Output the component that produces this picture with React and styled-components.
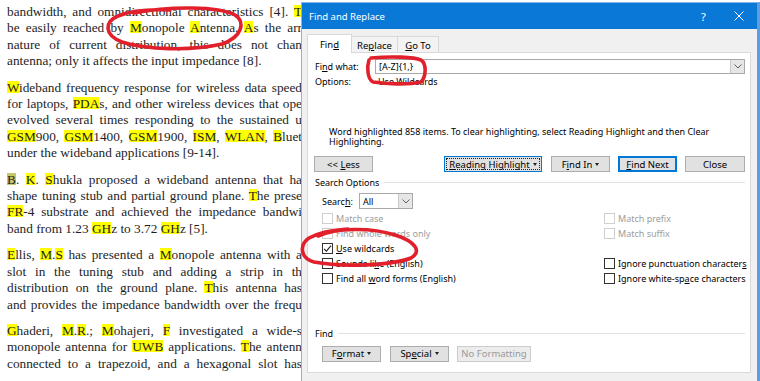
import React from "react";
import styled, { createGlobalStyle } from "styled-components";

const Global = createGlobalStyle`
  html, body { margin: 0; padding: 0; background: #fff; }
  * { box-sizing: border-box; }
`;

const Stage = styled.div`
  position: relative;
  width: 760px;
  height: 381px;
  overflow: hidden;
  background: #fff;
`;

/* ---------- document ---------- */
const Doc = styled.div`
  padding: 4px 0 0 7px;
  font-family: "Liberation Serif", "Times New Roman", serif;
  font-size: 13.3px;
  line-height: 16.4px;
  color: #1e1e1e;
`;
const Para = styled.div`
  margin-bottom: 10px;
`;
const Line = styled.div`
  width: ${(p) => p.$w}px;
  white-space: nowrap;
  text-align: ${(p) => (p.$last ? "left" : "justify")};
  text-align-last: ${(p) => (p.$last ? "left" : "justify")};
`;
const Hl = styled.span`
  ${(p) => {
    const c = p.$tone === "gray" ? "#c9c76c" : "#ffff00";
    return `background: linear-gradient(transparent 1px, ${c} 1px, ${c} calc(100% - 2px), transparent calc(100% - 2px));`;
  }}
`;

const paragraphs = [
  [
    "bandwidth, and omnidirectional characteristics [4]. {T}",
    "be easily reached by {M}onopole {A}ntenna. {A}s the arr",
    "nature of current distribution, this does not chan",
    "antenna; only it affects the input impedance [8].",
  ],
  [
    "{W}ideband frequency response for wireless data speed",
    "for laptops, {PDA}s, and other wireless devices that ope",
    "evolved several times responding to the sustained u",
    "{GSM}900, {GSM}1400, {GSM}1900, {ISM}, {WLAN}, {B}luet",
    "under the wideband applications [9-14].",
  ],
  [
    "<B>. {K}. {S}hukla proposed a wideband antenna that ha",
    "shape tuning stub and partial ground plane. {T}he prese",
    "{FR}-4 substrate and achieved the impedance bandwi",
    "band from 1.23 {GH}z to 3.72 {GH}z [5].",
  ],
  [
    "{E}llis, {M}.{S} has presented a {M}onopole antenna with a",
    "slot in the tuning stub and adding a strip in th",
    "distribution on the ground plane. {T}his antenna has",
    "and provides the impedance bandwidth over the frequ",
  ],
  [
    "{G}haderi, {M}.{R}.; {M}ohajeri, {F} investigated a wide-s",
    "monopole antenna for {UWB} applications. {T}he antenn",
    "connected to a trapezoid, and a hexagonal slot has",
  ],
];
const lastFlags = [true, true, true, false, false];

function renderLine(text) {
  const parts = text.split(/(\{[^}]*\}|<[^>]*>)/);
  return parts.map((s, i) => {
    if (s.startsWith("{")) return <Hl key={i}>{s.slice(1, -1)}</Hl>;
    if (s.startsWith("<"))
      return (
        <Hl key={i} $tone="gray">
          {s.slice(1, -1)}
        </Hl>
      );
    return <React.Fragment key={i}>{s}</React.Fragment>;
  });
}

/* ---------- dialog ---------- */
const Dialog = styled.section`
  position: absolute;
  left: 301px;
  top: 2px;
  width: 459px;
  height: 381px;
  border: 1px solid #86b6e6;
  border-right: 3px solid #5d9de0;
  border-bottom: none;
  background: #f0f0f0;
  font-family: "Noto Sans", "Open Sans", sans-serif;
  font-size: 9px;
  color: #000;
  display: flex;
  flex-direction: column;
`;
const TitleBar = styled.header`
  height: 26px;
  flex: none;
  background: #0a78d7;
  color: #fff;
  display: flex;
  align-items: center;
  padding-left: 7px;
`;
const TitleText = styled.div`
  flex: 1;
  font-size: 9.5px;
`;
const TitleButton = styled.div`
  width: 35px;
  height: 26px;
  display: flex;
  align-items: center;
  justify-content: center;
  font-size: 11px;
  margin-right: ${(p) => p.$mr || 0}px;
`;
const Body = styled.div`
  flex: 1;
  padding: 5px 6px 0 5px;
  display: flex;
  flex-direction: column;
`;
const TabRow = styled.div`
  display: flex;
  align-items: flex-end;
  height: 19px;
  position: relative;
  z-index: 1;
  margin-bottom: -1px;
`;
const Tab = styled.div`
  width: ${(p) => p.$w}px;
  height: ${(p) => (p.$sel ? 19 : 16)}px;
  margin-bottom: ${(p) => (p.$sel ? 0 : 1)}px;
  background: ${(p) => (p.$sel ? "#fff" : "#f3f3f3")};
  border: 1px solid #d9d9d9;
  border-bottom: none;
  border-left-width: ${(p) => (p.$noLeft ? 0 : 1)}px;
  display: flex;
  align-items: center;
  justify-content: center;
  padding-top: ${(p) => (p.$sel ? 0 : 1)}px;
  font-size: 9.5px;
`;
const Panel = styled.div`
  height: 321px;
  background: #fff;
  border: 1px solid #d9d9d9;
  padding: 0 5px 0 7px;
  display: flex;
  flex-direction: column;
`;
const U = styled.span`
  text-decoration: underline;
  text-underline-offset: 1px;
`;
const FieldRow = styled.div`
  display: flex;
  align-items: center;
  height: ${(p) => p.$h}px;
  margin-top: ${(p) => p.$mt}px;
  margin-left: ${(p) => p.$ml || 0}px;
`;
const Label = styled.div`
  width: ${(p) => p.$w}px;
  flex: none;
`;
const Combo = styled.div`
  flex: ${(p) => (p.$w ? "none" : 1)};
  width: ${(p) => (p.$w ? `${p.$w}px` : "auto")};
  height: ${(p) => p.$h}px;
  border: 1px solid #a9a9a9;
  background: #fff;
  display: flex;
  align-items: stretch;
`;
const ComboText = styled.div`
  flex: 1;
  padding-left: 3px;
  display: flex;
  align-items: center;
`;
const ComboDrop = styled.div`
  width: 14px;
  background: #e6e6e6;
  border-left: 1px solid #c9c9c9;
  display: flex;
  align-items: center;
  justify-content: center;
`;
const Message = styled.div`
  margin: 40px 0 0 14px;
  line-height: 10px;
  height: 20px;
`;
const ButtonRow = styled.div`
  display: flex;
  justify-content: space-between;
  margin-top: ${(p) => p.$mt}px;
  margin-left: ${(p) => p.$ml}px;
`;
const ButtonGroup = styled.div`
  display: flex;
  gap: ${(p) => p.$gap}px;
`;
const Button = styled.div`
  width: ${(p) => p.$w}px;
  height: 16px;
  background: ${(p) => (p.$disabled ? "#ececec" : "#e1e1e1")};
  border: 1px solid
    ${(p) => (p.$default || p.$focus ? "#0078d7" : p.$disabled ? "#cccccc" : "#adadad")};
  box-shadow: ${(p) => (p.$default ? "inset 0 0 0 1px #0078d7" : "none")};
  outline: ${(p) => (p.$focus ? "1px dotted #222" : "none")};
  outline-offset: -3px;
  color: ${(p) => (p.$disabled ? "#9a9a9a" : "#000")};
  display: flex;
  align-items: center;
  justify-content: center;
  white-space: pre;
  margin-right: ${(p) => p.$mr || 0}px;
  font-size: 9.5px;
`;
const Caret = styled.span`
  display: inline-block;
  width: 0;
  height: 0;
  margin-left: 3px;
  border-left: 2.5px solid transparent;
  border-right: 2.5px solid transparent;
  border-top: 3px solid #222;
`;
const GroupHeader = styled.div`
  display: flex;
  align-items: center;
  height: 12px;
  margin-top: ${(p) => p.$mt}px;
`;
const Rule = styled.div`
  flex: 1;
  height: 1px;
  background: #e2e2e2;
  margin-left: 5px;
`;
const OptionGrid = styled.div`
  display: grid;
  grid-template-columns: 282px 1fr;
  grid-auto-rows: 15.2px;
  margin: 1.5px 0 0 7px;
`;
const Option = styled.div`
  display: flex;
  align-items: center;
  gap: 3px;
  white-space: nowrap;
  color: ${(p) => (p.$disabled ? "#9d9d9d" : "#000")};
`;
const Box = styled.div`
  width: 11px;
  height: 11px;
  flex: none;
  border: 1px solid ${(p) => (p.$disabled ? "#cfcfcf" : "#333")};
  background: #fff;
  display: flex;
  align-items: center;
  justify-content: center;
`;

const Chevron = () => (
  <svg width="8" height="5" viewBox="0 0 8 5">
    <path d="M0.5 0.5 L4 4 L7.5 0.5" fill="none" stroke="#606060" strokeWidth="1" />
  </svg>
);
const Check = () => (
  <svg width="9" height="9" viewBox="0 0 9 9">
    <path d="M1 4.8 L3.4 7.2 L8 1.6" fill="none" stroke="#222" strokeWidth="1.1" />
  </svg>
);
const CloseX = () => (
  <svg width="10" height="10" viewBox="0 0 10 10">
    <path d="M0.5 0.5 L9.5 9.5 M9.5 0.5 L0.5 9.5" stroke="#fff" strokeWidth="1" />
  </svg>
);

const CheckOption = ({ checked, disabled, children }) => (
  <Option $disabled={disabled}>
    <Box $disabled={disabled}>{checked && <Check />}</Box>
    <span>{children}</span>
  </Option>
);

/* ---------- annotations ---------- */
const Ink = styled.svg`
  position: absolute;
  left: 0;
  top: 0;
  width: 760px;
  height: 381px;
  pointer-events: none;
  z-index: 5;
`;

export default function App() {
  return (
    <Stage>
      <Global />
      <Doc>
        {paragraphs.map((lines, pi) => (
          <Para key={pi}>
            {lines.map((l, li) => {
              const last = li === lines.length - 1 && lastFlags[pi];
              return (
                <Line key={li} $w={295} $last={last}>
                  {renderLine(l)}
                </Line>
              );
            })}
          </Para>
        ))}
      </Doc>

      <Dialog>
        <TitleBar>
          <TitleText>Find and Replace</TitleText>
          <TitleButton>?</TitleButton>
          <TitleButton $mr={1}>
            <CloseX />
          </TitleButton>
        </TitleBar>
        <Body>
          <TabRow>
            <Tab $w={45} $sel>
              <span>
                Fin<U>d</U>
              </span>
            </Tab>
            <Tab $w={46} $noLeft>
              <span>
                Re<U>p</U>lace
              </span>
            </Tab>
            <Tab $w={41} $noLeft>
              <span>
                <U>G</U>o To
              </span>
            </Tab>
          </TabRow>
          <Panel>
            <FieldRow $h={15} $mt={6}>
              <Label $w={60}>
                Fi<U>n</U>d what:
              </Label>
              <Combo $h={15}>
                <ComboText>[A-Z]{"{1,}"}</ComboText>
                <ComboDrop>
                  <Chevron />
                </ComboDrop>
              </Combo>
            </FieldRow>
            <FieldRow $h={12} $mt={1}>
              <Label $w={63}>Options:</Label>
              <div>Use Wildcards</div>
            </FieldRow>

            <Message>
              Word highlighted 858 items. To clear highlighting, select Reading Highlight and then Clear
              <br />
              Highlighting.
            </Message>

            <ButtonRow $mt={9} $ml={-1}>
              <Button $w={59}>
                <span>
                  {"<< "}
                  <U>L</U>ess
                </span>
              </Button>
              <ButtonGroup $gap={8}>
                <Button $w={98} $focus $mr={1}>
                  <span>
                    <U>R</U>eading Highlight
                  </span>
                  <Caret />
                </Button>
                <Button $w={59}>
                  <span>
                    F<U>i</U>nd In
                  </span>
                  <Caret />
                </Button>
                <Button $w={59} $default>
                  <span>
                    <U>F</U>ind Next
                  </span>
                </Button>
                <Button $w={60}>Close</Button>
              </ButtonGroup>
            </ButtonRow>

            <GroupHeader $mt={4}>
              <span>Search Options</span>
              <Rule />
            </GroupHeader>

            <FieldRow $h={16} $mt={5} $ml={7}>
              <Label $w={37}>
                Searc<U>h</U>:
              </Label>
              <Combo $h={16} $w={54}>
                <ComboText>All</ComboText>
                <ComboDrop>
                  <Chevron />
                </ComboDrop>
              </Combo>
            </FieldRow>

            <OptionGrid>
              <CheckOption disabled>Match case</CheckOption>
              <CheckOption disabled>Match prefix</CheckOption>
              <CheckOption disabled>Find whole words only</CheckOption>
              <CheckOption disabled>Match suffix</CheckOption>
              <CheckOption checked>
                <U>U</U>se wildcards
              </CheckOption>
              <div />
              <CheckOption>
                Sounds li<U>k</U>e (English)
              </CheckOption>
              <CheckOption>
                Ignore punctuation character<U>s</U>
              </CheckOption>
              <CheckOption>
                Find all <U>w</U>ord forms (English)
              </CheckOption>
              <CheckOption>
                Ignore white-sp<U>a</U>ce characters
              </CheckOption>
            </OptionGrid>

            <GroupHeader $mt={41.5}>
              <span>Find</span>
              <Rule />
            </GroupHeader>

            <ButtonRow $mt={6} $ml={7}>
              <ButtonGroup $gap={8}>
                <Button $w={59} $mr={1}>
                  <span>
                    F<U>o</U>rmat
                  </span>
                  <Caret />
                </Button>
                <Button $w={59}>
                  <span>
                    Sp<U>e</U>cial
                  </span>
                  <Caret />
                </Button>
                <Button $w={74} $disabled>
                  No Formatting
                </Button>
              </ButtonGroup>
            </ButtonRow>
          </Panel>
        </Body>
      </Dialog>

      <Ink viewBox="0 0 760 381">
        <g fill="none" stroke="#e2202b" strokeWidth="3.6" strokeLinecap="round" strokeLinejoin="round">
          <path d="M134 13 C170 6, 218 6, 235 15 C246 22, 242 37, 222 44 C192 51, 146 50, 122 42 C104 35, 104 22, 118 16 C130 11, 150 9, 170 10" />
          <path d="M371 58 C392 56, 414 57, 421 60 C427 64, 426 77, 421 82 C408 85, 386 84, 373 82 C367 79, 367 66, 369 60" />
          <path d="M318 236 C336 228, 370 227, 395 235 C414 241, 423 251, 411 258 C390 266, 340 267, 314 262 C300 258, 299 245, 309 238 C318 233, 332 230, 348 229" />
        </g>
      </Ink>
    </Stage>
  );
}
